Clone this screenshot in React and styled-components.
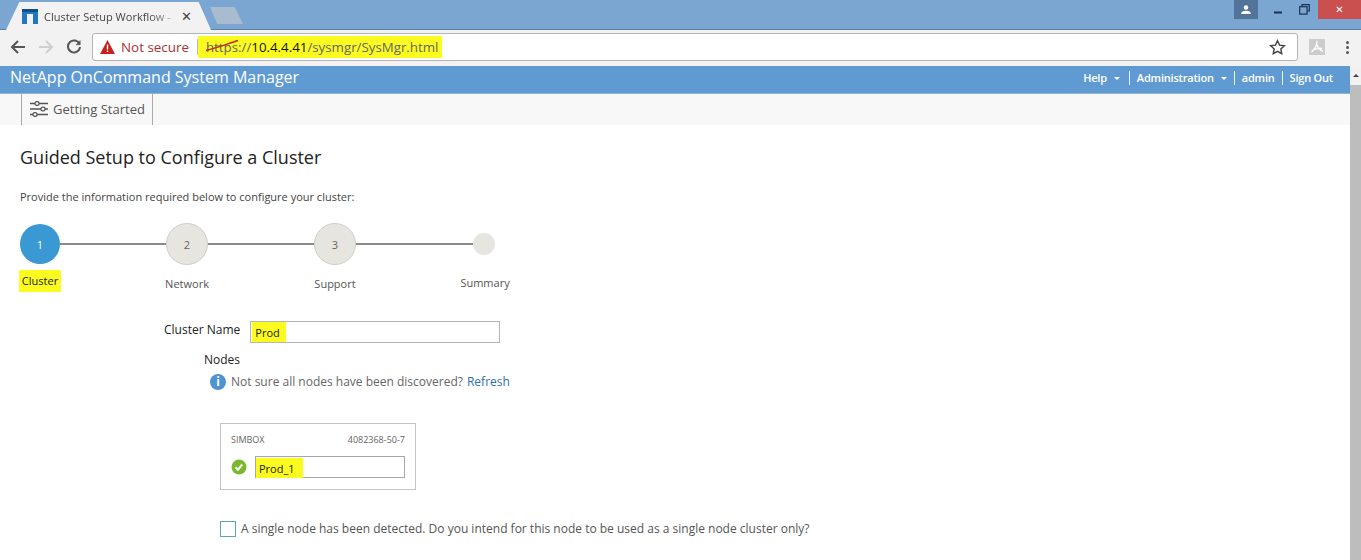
import styled, { createGlobalStyle } from "styled-components";

const Global = createGlobalStyle`
  html, body { margin: 0; padding: 0; height: 100%; background: #fff; overflow: hidden; }
  body { font-family: "Open Sans", "Liberation Sans", sans-serif; }
`;

const steps = [
  { label: "Cluster", n: "1", active: true },
  { label: "Network", n: "2" },
  { label: "Support", n: "3" },
  { label: "Summary", small: true },
];

function LogoIcon() {
  return (
    <svg width="16" height="15" viewBox="0 0 16 15">
      <path fill="#1f78c0" d="M0 0h16v15h-5V5H5v10H0z" />
      <path fill="#0e4f8a" d="M0 0h16v3H0z" />
    </svg>
  );
}

function SlidersIcon() {
  return (
    <svg width="18" height="16" viewBox="0 0 18 16" fill="none" stroke="#555" strokeWidth="1.3">
      <path d="M0 2.500h18M0 8h18M0 13.500h18" />
      <rect x="5" y="0.700" width="4" height="3.600" rx="1.600" fill="#f8f8f8" />
      <rect x="11" y="6.200" width="4" height="3.600" rx="1.600" fill="#f8f8f8" />
      <rect x="3" y="11.700" width="4" height="3.600" rx="1.600" fill="#f8f8f8" />
    </svg>
  );
}

export default function App() {
  return (
    <>
      <Global />
      <TabStrip>
        <Tab>
          <LogoIcon />
          <TabTitle>Cluster Setup Workflow -</TabTitle>
          <TabClose>✕</TabClose>
        </Tab>
        <NewTab />
        <WindowControls>
          <UserBadge>
            <svg width="10" height="9" viewBox="0 0 12 11" fill="#fff">
              <circle cx="6" cy="3" r="2.700" />
              <path d="M0 11c0-3 2.500-4 6-4s6 1 6 4z" />
            </svg>
          </UserBadge>
          <WinButton>
            <svg width="10" height="10" viewBox="0 0 10 10">
              <path d="M1 7.500h8" stroke="#17324f" strokeWidth="2" />
            </svg>
          </WinButton>
          <WinButton>
            <svg width="11" height="11" viewBox="0 0 11 11" fill="none" stroke="#17324f" strokeWidth="1.200">
              <path d="M3 2.500V.7h7.300V7H8.200" />
              <rect x=".7" y="2.700" width="7.400" height="7.400" />
            </svg>
          </WinButton>
          <CloseButton>✕</CloseButton>
        </WindowControls>
      </TabStrip>

      <Toolbar>
        <NavIcon viewBox="0 0 16 16" $color="#555">
          <path d="M15 8H2M8 2 2 8l6 6" />
        </NavIcon>
        <NavIcon viewBox="0 0 16 16" $color="#cfcfcf">
          <path d="M1 8h13M8 2l6 6-6 6" />
        </NavIcon>
        <NavIcon viewBox="0 0 16 16" $color="#555">
          <path d="M13.600 5.200A6 6 0 1 0 14 8" />
          <path d="M14.200 1.400v4.400H9.800" fill="#555" strokeWidth="0.500" />
        </NavIcon>
        <Omnibox>
          <svg width="15" height="14" viewBox="0 0 15 14">
            <path fill="#c5221f" d="M7.500 0 15 14H0z" />
            <path fill="#fff" d="M6.800 4.500h1.400v5H6.800zM6.800 10.500h1.400V12H6.800z" />
          </svg>
          <NotSecure>Not secure</NotSecure>
          <OmniDivider />
          <UrlMark>
            <Scheme>
              https
              <svg width="34" height="13" viewBox="0 0 34 13">
                <path d="M1 11.500C12 9 22 5 33 1.500" fill="none" stroke="#c0281e" strokeWidth="1.500" />
              </svg>
            </Scheme>
            <UrlGrey>://</UrlGrey>
            <UrlHost>10.4.4.41</UrlHost>
            <UrlGrey>/sysmgr/SysMgr.html</UrlGrey>
          </UrlMark>
          <StarIcon viewBox="0 0 24 24">
            <path d="M12 2.500l2.900 6.200 6.800.8-5 4.600 1.300 6.700-6-3.300-6 3.300 1.300-6.700-5-4.600 6.800-.8z" />
          </StarIcon>
        </Omnibox>
        <PdfBox>
          <svg width="12" height="12" viewBox="0 0 12 12" fill="none" stroke="#fff" strokeWidth="1.300">
            <path d="M6 0c0 4-2 8-5.500 11M6 4c1 3 3 5 6 6.500M2 9c3-1.500 6-2 9-1.500" />
          </svg>
        </PdfBox>
        <MenuDots>
          <i />
          <i />
          <i />
        </MenuDots>
      </Toolbar>

      <Viewport>
        <AppArea>
          <AppHeader>
            <Brand>NetApp OnCommand System Manager</Brand>
            <HeaderNav>
              <HeaderLink>
                Help <Caret />
              </HeaderLink>
              <HeaderLink>
                Administration <Caret />
              </HeaderLink>
              <HeaderLink>admin</HeaderLink>
              <HeaderLink>Sign Out</HeaderLink>
            </HeaderNav>
          </AppHeader>

          <SubNav>
            <SubNavItem>
              <SlidersIcon />
              Getting Started
            </SubNavItem>
          </SubNav>

          <Content>
            <Title>Guided Setup to Configure a Cluster</Title>
            <Intro>Provide the information required below to configure your cluster:</Intro>

            <Stepper>
              {steps.map((s, i) => (
                <StepCell key={s.label}>
                  <Circle $active={s.active} $small={s.small}>
                    {s.n}
                  </Circle>
                  {i < steps.length - 1 && <StepLine />}
                </StepCell>
              ))}
              {steps.map((s) => (
                <StepLabel key={s.label} $active={s.active} $small={s.small}>
                  {s.active ? <Marker>{s.label}</Marker> : s.label}
                </StepLabel>
              ))}
            </Stepper>

            <Form>
              <NameRow>
                <FieldLabel>Cluster Name</FieldLabel>
                <NameInput>
                  <Marker>Prod&nbsp;</Marker>
                </NameInput>
              </NameRow>
              <NodesLabel>Nodes</NodesLabel>
              <InfoRow>
                <InfoDot>i</InfoDot>
                Not sure all nodes have been discovered?
                <RefreshLink>Refresh</RefreshLink>
              </InfoRow>

              <NodeCard>
                <NodeMeta>
                  <span>SIMBOX</span>
                  <span>4082368-50-7</span>
                </NodeMeta>
                <NodeRow>
                  <svg width="16" height="16" viewBox="0 0 16 16">
                    <circle cx="8" cy="8" r="7.500" fill="#7ab82c" />
                    <path d="M4.500 8.300l2.400 2.500 4.300-5.300" fill="none" stroke="#fff" strokeWidth="2" />
                  </svg>
                  <NodeInput>
                    <Marker>Prod_1&nbsp;&nbsp;</Marker>
                  </NodeInput>
                </NodeRow>
              </NodeCard>

              <CheckRow>
                <CheckBox />
                A single node has been detected. Do you intend for this node to be used as a single node cluster only?
              </CheckRow>
            </Form>
          </Content>
        </AppArea>
        <Scrollbar>
          <ScrollArrow />
          <ScrollThumb />
        </Scrollbar>
      </Viewport>
    </>
  );
}

const TabStrip = styled.div`
  height: 30px;
  background: #7ba6d1;
  border-bottom: 1px solid #5d7fa3;
  box-sizing: border-box;
  display: flex;
  align-items: flex-end;
  padding-left: 6px;
`;
const Tab = styled.div`
  width: 205px;
  height: 28px;
  box-sizing: border-box;
  margin-bottom: -1px;
  background: #f2f2f2;
  clip-path: polygon(0 100%, 6.5% 0, 94% 0, 100% 100%);
  display: flex;
  align-items: center;
  padding: 0 10px 0 16px;
  gap: 6px;
`;
const TabTitle = styled.span`
  flex: 1;
  font-size: 11px;
  color: #444;
  white-space: nowrap;
  mask-image: linear-gradient(to right, #000 80%, rgba(0, 0, 0, 0.25) 100%);
`;
const TabClose = styled.span`
  font-size: 13px;
  font-weight: 700;
  color: #444;
  font-family: "DejaVu Sans", sans-serif;
  margin-right: 9px;
`;
const NewTab = styled.div`
  width: 33px;
  height: 17px;
  margin: 0 0 5px -1px;
  background: #a9bccf;
  clip-path: polygon(0 0, 75% 0, 100% 100%, 22% 100%);
`;
const WindowControls = styled.div`
  margin-left: auto;
  align-self: flex-start;
  display: flex;
  height: 19px;
`;
const UserBadge = styled.div`
  width: 24px;
  height: 19px;
  background: #527499;
  display: flex;
  align-items: center;
  justify-content: center;
  margin-right: 7px;
`;
const WinButton = styled.div`
  width: 26px;
  height: 19px;
  display: flex;
  align-items: center;
  justify-content: center;
`;
const CloseButton = styled.div`
  width: 43px;
  height: 19px;
  margin-left: 1px;
  background: #c9504f;
  color: #fff;
  font-size: 10px;
  font-family: "DejaVu Sans", sans-serif;
  font-weight: 700;
  display: flex;
  align-items: center;
  justify-content: center;
`;

const Toolbar = styled.div`
  height: 36px;
  background: #f2f2f2;
  display: flex;
  align-items: center;
  padding: 0 0 2px 10px;
  box-sizing: border-box;
`;
const NavIcon = styled.svg`
  width: 16px;
  height: 16px;
  margin-right: 12px;
  fill: none;
  stroke: ${(p) => p.$color};
  stroke-width: 2;
  flex: none;
`;
const Omnibox = styled.div`
  width: 1206px;
  height: 28px;
  box-sizing: border-box;
  margin-left: -2px;
  background: #fff;
  border: 1px solid #b4b4b4;
  border-radius: 3px;
  display: flex;
  align-items: center;
  padding: 0 11px 0 7px;
`;
const NotSecure = styled.span`
  font-size: 13.4px;
  color: #a33;
  margin-left: 6px;
`;
const OmniDivider = styled.span`
  width: 1px;
  height: 16px;
  background: #bbb;
  margin: 0 0 0 8px;
`;
const UrlMark = styled.span`
  font-size: 13.3px;
  line-height: 16px;
  background: #fbfb20;
  padding: 3px 4px 3px 8px;
  white-space: nowrap;
`;
const Scheme = styled.span`
  position: relative;
  color: #666;
  svg {
    position: absolute;
    left: -1px;
    top: 1px;
  }
`;
const UrlGrey = styled.span`
  color: #666;
`;
const UrlHost = styled.span`
  color: #111;
`;
const StarIcon = styled.svg`
  width: 17px;
  height: 17px;
  margin-left: auto;
  fill: none;
  stroke: #444;
  stroke-width: 2;
`;
const PdfBox = styled.div`
  width: 16px;
  height: 16px;
  margin-left: 11px;
  background: #ccc;
  display: flex;
  align-items: center;
  justify-content: center;
`;
const MenuDots = styled.div`
  margin-left: 21px;
  display: flex;
  flex-direction: column;
  gap: 2px;
  i {
    width: 3px;
    height: 3px;
    border-radius: 50%;
    background: #555;
  }
`;

const Viewport = styled.div`
  display: flex;
  height: 494px;
`;
const AppArea = styled.div`
  flex: 1;
  min-width: 0;
`;
const AppHeader = styled.div`
  height: 28px;
  box-sizing: border-box;
  background: #5f9bd2;
  border-bottom: 1px solid #8fb5d9;
  display: flex;
  align-items: center;
  justify-content: space-between;
  padding: 0 10px 5px 10px;
`;
const Brand = styled.div`
  font-size: 16px;
  color: #fff;
`;
const HeaderNav = styled.div`
  display: flex;
  align-items: center;
  margin-top: 2px;
`;
const HeaderLink = styled.span`
  font-size: 11px;
  letter-spacing: -0.2px;
  font-weight: 600;
  color: #fff;
  padding: 0 7px;
  line-height: 14px;
  display: flex;
  align-items: center;
  gap: 4px;
  &:first-child {
    padding-right: 9px;
  }
  & + & {
    border-left: 1px solid #eaf2fa;
  }
`;
const Caret = styled.i`
  display: inline-block;
  border: 3px solid transparent;
  border-top-color: #fff;
  border-bottom: 0;
  margin-left: 3px;
`;
const SubNav = styled.div`
  height: 31px;
  background: #f8f8f8;
  padding-left: 21px;
  display: flex;
`;
const SubNavItem = styled.div`
  width: 132px;
  box-sizing: border-box;
  border-left: 1px solid #aaa;
  border-right: 1px solid #aaa;
  display: flex;
  align-items: center;
  gap: 5px;
  padding: 0 0 2px 8px;
  font-size: 13px;
  color: #555;
`;
const Content = styled.div`
  padding: 19px 0 0 20px;
`;
const Title = styled.h1`
  margin: 0;
  font-size: 18px;
  line-height: 26px;
  font-weight: 400;
  color: #222;
`;
const Intro = styled.p`
  margin: 19px 0 0;
  font-size: 11px;
  line-height: 16px;
  color: #444;
`;
const Stepper = styled.div`
  display: grid;
  grid-template-columns: 146px 148px 159px 22px;
  margin-top: 18px;
`;
const StepCell = styled.div`
  display: flex;
  align-items: center;
  height: 42px;
`;
const Circle = styled.div`
  flex: none;
  box-sizing: border-box;
  width: ${(p) => (p.$active ? 40 : p.$small ? 22 : 42)}px;
  height: ${(p) => (p.$active ? 40 : p.$small ? 22 : 42)}px;
  border-radius: 50%;
  background: ${(p) => (p.$active ? "#3a99d2" : "#e6e5e0")};
  border: ${(p) => (p.$active || p.$small ? "0" : "1px solid #cfcfca")};
  color: ${(p) => (p.$active ? "#fff" : "#666")};
  font-size: 11px;
  display: flex;
  align-items: center;
  justify-content: center;
`;
const StepLine = styled.div`
  flex: 1;
  height: 2px;
  background: #8a8a8a;
`;
const StepLabel = styled.div`
  font-size: 11px;
  line-height: 16px;
  color: ${(p) => (p.$active ? "#222" : "#555")};
  width: ${(p) => (p.$small ? "22px" : p.$active ? "40px" : "42px")};
  padding-left: ${(p) => (p.$small ? 1 : 0)}px;
  display: flex;
  justify-content: center;
  white-space: nowrap;
  margin-top: ${(p) => (p.$active ? 5 : p.$small ? 10 : 11)}px;
`;
const Marker = styled.span`
  background: #fbfb20;
  padding: 3px 3px 2px;
  margin: 0 -2px;
`;
const Form = styled.div`
  padding: 29px 0 0 0;
`;
const NameRow = styled.div`
  display: flex;
  align-items: center;
  margin-left: 144px;
  gap: 10px;
`;
const FieldLabel = styled.label`
  font-size: 12px;
  color: #222;
  margin-bottom: 5px;
`;
const NameInput = styled.div`
  width: 250px;
  height: 22px;
  box-sizing: border-box;
  border: 1px solid #b5b5b5;
  font-size: 11px;
  color: #222;
  display: flex;
  align-items: center;
  padding: 0 0 0 3px;
`;
const NodesLabel = styled.div`
  margin: 8px 0 0 184px;
  font-size: 12px;
  line-height: 17px;
  color: #222;
`;
const InfoRow = styled.div`
  margin: 6px 0 0 190px;
  display: flex;
  align-items: center;
  gap: 5px;
  font-size: 12px;
  line-height: 16px;
  color: #666;
`;
const InfoDot = styled.span`
  width: 16px;
  height: 16px;
  border-radius: 50%;
  background: #4f94d0;
  color: #fff;
  font-size: 12px;
  font-weight: 700;
  display: flex;
  align-items: center;
  justify-content: center;
`;
const RefreshLink = styled.a`
  color: #2d70a8;
  margin-left: -1px;
`;
const NodeCard = styled.div`
  margin: 33px 0 0 200px;
  width: 196px;
  height: 67px;
  box-sizing: border-box;
  border: 1px solid #c4c4c4;
  padding: 9px 10px 0;
`;
const NodeMeta = styled.div`
  display: flex;
  justify-content: space-between;
  font-size: 9px;
  line-height: 14px;
  color: #666;
`;
const NodeRow = styled.div`
  display: flex;
  align-items: center;
  gap: 8px;
  margin-top: 9px;
`;
const NodeInput = styled.div`
  flex: 1;
  height: 22px;
  box-sizing: border-box;
  border: 1px solid #a8a8a8;
  font-size: 11px;
  color: #222;
  display: flex;
  align-items: center;
  padding: 1px 0 0 2px;
`;
const CheckRow = styled.div`
  margin: 30px 0 0 200px;
  display: flex;
  align-items: center;
  gap: 5px;
  font-size: 12px;
  line-height: 17px;
  color: #555;
  white-space: nowrap;
`;
const CheckBox = styled.span`
  width: 16px;
  height: 16px;
  box-sizing: border-box;
  border: 1px solid #5aa3b8;
`;
const Scrollbar = styled.div`
  width: 11px;
  background: #f1f1f1;
  display: flex;
  flex-direction: column;
  align-items: center;
  padding-top: 8px;
  box-sizing: border-box;
`;
const ScrollArrow = styled.i`
  border: 3px solid transparent;
  border-bottom-color: #444;
  border-top: 0;
`;
const ScrollThumb = styled.div`
  width: 100%;
  flex: 1;
  margin-top: 8px;
  background: #bdbdbd;
`;
